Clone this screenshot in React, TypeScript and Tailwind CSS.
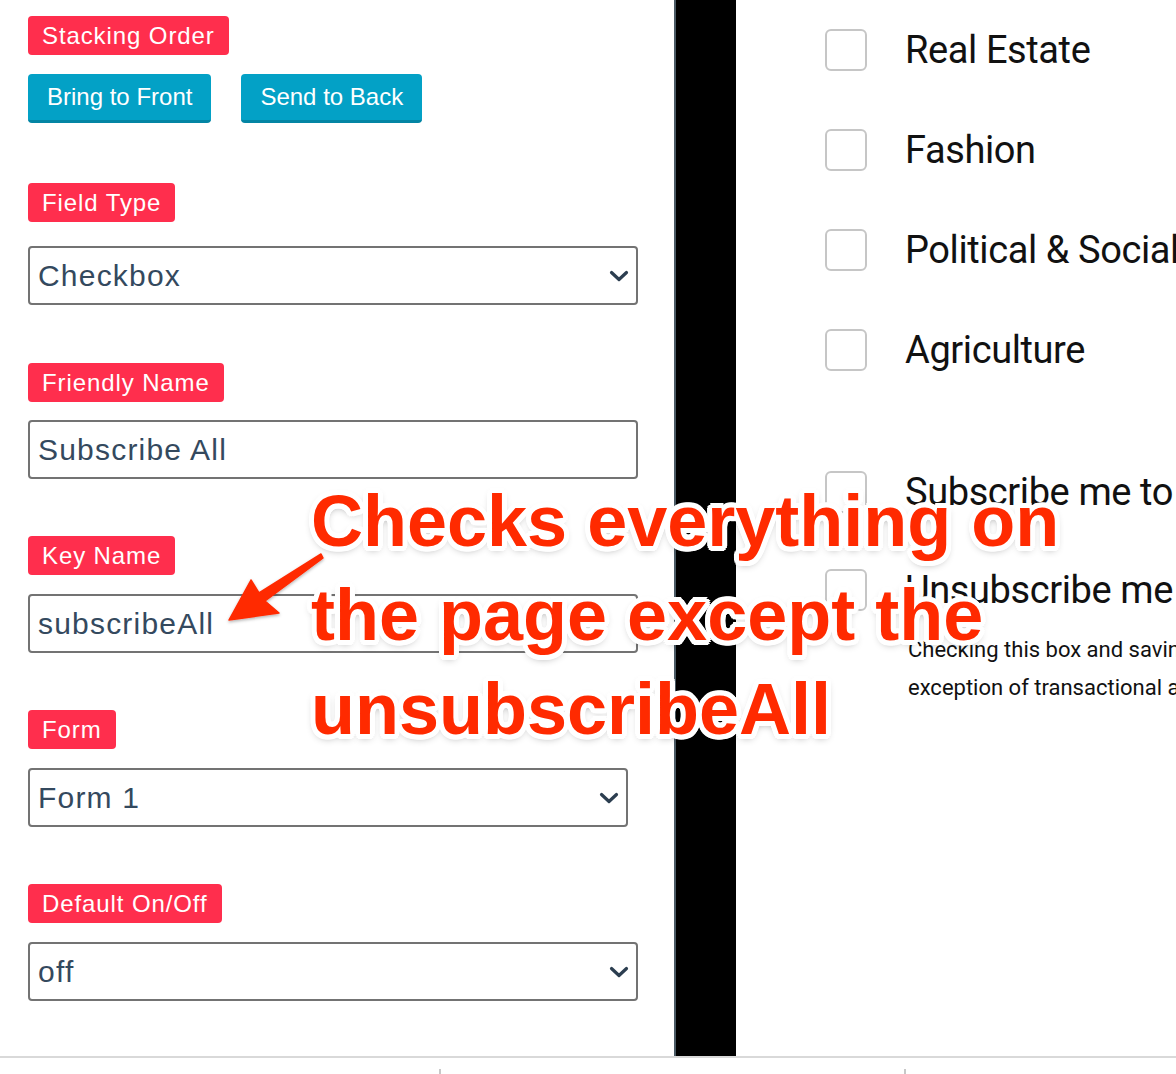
import React from "react";

const Chevron = () => (
  <svg width="20" height="12" viewBox="0 0 20 12" className="shrink-0">
    <path
      d="M2.5 2.5 L10 9.5 L17.5 2.5"
      fill="none"
      stroke="#2c3e50"
      strokeWidth="3.2"
      strokeLinecap="round"
      strokeLinejoin="round"
    />
  </svg>
);

const Badge = ({ children }: { children: React.ReactNode }) => (
  <div className="inline-flex h-[39px] items-center rounded-[4px] bg-[#ff2e4d] px-[14px] text-[24px] tracking-[0.9px] text-white">
    {children}
  </div>
);

const Field = ({
  value,
  select,
  width = "w-[610px]",
}: {
  value: string;
  select?: boolean;
  width?: string;
}) => (
  <div
    className={`flex h-[59px] ${width} items-center justify-between rounded-[4px] border-2 border-[#737373] bg-white pl-[8px] pr-[7px] text-[30px] tracking-[1.2px] text-[#34495e]`}
  >
    <span>{value}</span>
    {select ? <Chevron /> : null}
  </div>
);

const Check = ({ label }: { label: string }) => (
  <div className="flex h-[42px] items-center gap-[38px] whitespace-nowrap">
    <div className="h-[42px] w-[42px] shrink-0 rounded-[6px] border-2 border-[#c6c6c6] bg-white" />
    <span className="text-[38px] tracking-[-0.4px]">{label}</span>
  </div>
);

const outline =
  "[text-shadow:5px_0_0_#fff,-5px_0_0_#fff,0_5px_0_#fff,0_-5px_0_#fff,3.5px_3.5px_0_#fff,-3.5px_3.5px_0_#fff,3.5px_-3.5px_0_#fff,-3.5px_-3.5px_0_#fff,4.6px_1.9px_0_#fff,-4.6px_1.9px_0_#fff,4.6px_-1.9px_0_#fff,-4.6px_-1.9px_0_#fff,1.9px_4.6px_0_#fff,-1.9px_4.6px_0_#fff,1.9px_-4.6px_0_#fff,-1.9px_-4.6px_0_#fff,0_3px_9px_rgba(0,0,0,0.45)]";

export default function App() {
  return (
    <div className="relative h-[1074px] w-[1176px] overflow-hidden bg-white font-['Liberation_Sans',Arial,sans-serif]">
      <div className="flex h-[1056px]">
        {/* settings column */}
        <div className="flex w-[674px] shrink-0 flex-col items-start pl-[28px] pt-[16px]">
          <Badge>Stacking Order</Badge>
          <div className="mt-[19px] flex gap-[30px]">
            <button className="h-[49px] rounded-[4px] border-b-[3px] border-[#0385a4] bg-[#03a1c6] px-[19px] text-[24px] text-white">
              Bring to Front
            </button>
            <button className="h-[49px] rounded-[4px] border-b-[3px] border-[#0385a4] bg-[#03a1c6] px-[19px] text-[24px] text-white">
              Send to Back
            </button>
          </div>

          <div className="mt-[60px]">
            <Badge>Field Type</Badge>
          </div>
          <div className="mt-[24px]">
            <Field value="Checkbox" select />
          </div>

          <div className="mt-[58px]">
            <Badge>Friendly Name</Badge>
          </div>
          <div className="mt-[18px]">
            <Field value="Subscribe All" />
          </div>

          <div className="mt-[57px]">
            <Badge>Key Name</Badge>
          </div>
          <div className="mt-[19px]">
            <Field value="subscribeAll" />
          </div>

          <div className="mt-[57px]">
            <Badge>Form</Badge>
          </div>
          <div className="mt-[19px]">
            <Field value="Form 1" select width="w-[600px]" />
          </div>

          <div className="mt-[57px]">
            <Badge>Default On/Off</Badge>
          </div>
          <div className="mt-[19px]">
            <Field value="off" select />
          </div>
        </div>

        {/* divider */}
        <div className="h-full w-[62px] shrink-0 border-l-2 border-[#4b5a64] bg-black" />

        {/* preview column */}
        <div className="flex min-w-0 flex-1 flex-col overflow-hidden pl-[89px] pt-[29px] font-['Roboto',sans-serif] text-[#111]">
          <Check label="Real Estate" />
          <div className="mt-[58px]">
            <Check label="Fashion" />
          </div>
          <div className="mt-[58px]">
            <Check label="Political & Social Causes" />
          </div>
          <div className="mt-[58px]">
            <Check label="Agriculture" />
          </div>
          <div className="mt-[100px]">
            <Check label="Subscribe me to all" />
          </div>
          <div className="mt-[56px]">
            <Check label="Unsubscribe me from all" />
          </div>
          <p className="ml-[83px] mt-[20px] whitespace-nowrap text-[22px] leading-[38px]">
            Checking this box and saving will unsubscribe you from all emails, with the
            <br />
            exception of transactional and account messages.
          </p>
        </div>
      </div>

      {/* footer rule */}
      <div className="flex h-[18px] items-end border-t-2 border-[#d9d9d9] pb-0">
        <div className="ml-[439px] h-[5px] w-[2px] bg-[#c8c8c8]" />
        <div className="ml-[463px] h-[5px] w-[2px] bg-[#c8c8c8]" />
      </div>

      {/* callout arrow */}
      <svg
        className="pointer-events-none absolute left-0 top-0"
        width="1176"
        height="1074"
        viewBox="0 0 1176 1074"
      >
        <defs>
          <filter id="arrowShadow" x="-20%" y="-20%" width="140%" height="140%">
            <feDropShadow dx="0" dy="1.5" stdDeviation="1.5" floodColor="#000" floodOpacity="0.3" />
          </filter>
        </defs>
        <polygon
          points="321,554 259,593 251,580 229,620 279,613 265,601 323,558"
          fill="#ff2a00"
          stroke="#ff2a00"
          strokeWidth="1.5"
          strokeLinejoin="round"
          filter="url(#arrowShadow)"
        />
      </svg>

      {/* callout text */}
      <div
        className={`pointer-events-none absolute left-[311px] top-[474px] whitespace-nowrap text-[72px] font-bold leading-[94px] text-[#ff2a00] ${outline}`}
      >
        Checks everything on
        <br />
        the page except the
        <br />
        unsubscribeAll
      </div>
    </div>
  );
}
